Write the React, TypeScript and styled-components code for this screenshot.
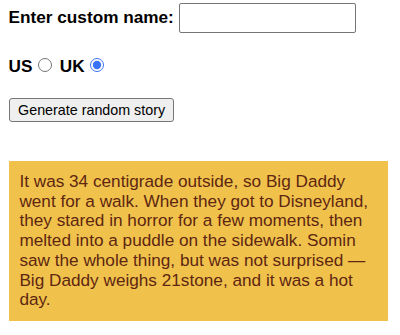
import React, { useState } from 'react'
import styled, { createGlobalStyle } from 'styled-components'

const GlobalStyle = createGlobalStyle`
    html, body {
        margin: 0;
        padding: 0;
        background: #ffffff;
    }
    body {
        font-family: "Liberation Sans", Arial, Helvetica, sans-serif;
    }
`

const Page = styled.div`
    width: 379px;
    padding: 3px 8px 0 8.6px;
    font-size: 17.2px;
    color: #000000;
`

const Row = styled.div`
    padding-bottom: 21.6px;
`

const Label = styled.label`
    font-weight: bold;
`

const NameInput = styled.input`
    box-sizing: border-box;
    width: 177px;
    height: 30px;
    padding: 5.4px;
    margin: 0;
    border: 1px solid #767676;
    border-radius: 2px;
    font-family: "Liberation Sans", Arial, sans-serif;
    font-size: 14.4px;
    vertical-align: baseline;
`

const Radio = styled.input`
    width: 14px;
    height: 14px;
    margin: 3.2px 3.2px 0 5.4px;
    accent-color: #3b73f6;
`

const Button = styled.button`
    font-family: "Liberation Sans", Arial, sans-serif;
    font-size: 14.3px;
    color: #000000;
    padding: 3px 8px 3px 8.5px;
    border: 1px solid #767676;
    border-radius: 3px;
    background: #efefef;
    line-height: normal;
`

const Story = styled.p`
    margin: 17.2px 0 0;
    padding: 10.8px 10.8px;
    background: #f0c24b;
    color: #5e2612;
    line-height: 19.75px;
`

export default function App() {
    const [country, setCountry] = useState('uk')
    const [name, setName] = useState('')

    return (
        <Page>
            <GlobalStyle />
            <Row>
                <Label htmlFor="customname">Enter custom name:</Label>{' '}
                <NameInput id="customname" type="text" value={name} onChange={e => setName(e.target.value)} />
            </Row>
            <Row>
                <Label htmlFor="us">US</Label>
                <Radio id="us" type="radio" name="ukus" value="us" checked={country === 'us'} onChange={() => setCountry('us')} />{' '}
                <Label htmlFor="uk">UK</Label>
                <Radio id="uk" type="radio" name="ukus" value="uk" checked={country === 'uk'} onChange={() => setCountry('uk')} />
            </Row>
            <Row>
                <Button>Generate random story</Button>
            </Row>
            <Story>
                It was 34 centigrade outside, so Big Daddy went for a walk. When they got to Disneyland, they stared in horror for a few moments, then melted into a puddle on the sidewalk. Somin saw the whole thing, but was not surprised — Big Daddy weighs 21stone, and it was a hot day.
            </Story>
        </Page>
    )
}
